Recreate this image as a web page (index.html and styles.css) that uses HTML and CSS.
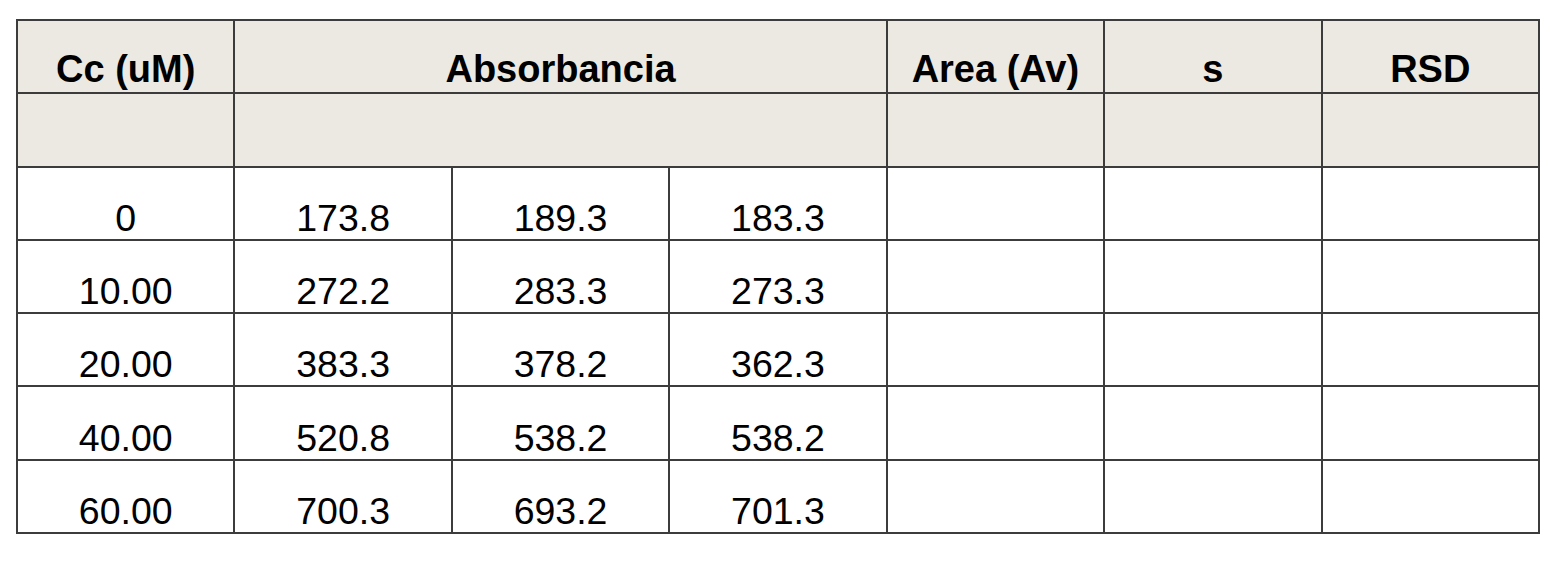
FILE: index.html
```html
<!DOCTYPE html>
<html>
<head>
<meta charset="utf-8">
<link rel="stylesheet" href="styles.css">
</head>
<body>
<div class="wrap">
<table class="grid">
<colgroup>
<col><col><col><col><col><col><col>
</colgroup>
<tr class="head">
<th>Cc (uM)</th>
<th colspan="3">Absorbancia</th>
<th>Area (Av)</th>
<th>s</th>
<th>RSD</th>
</tr>
<tr class="head">
<td></td>
<td colspan="3"></td>
<td></td>
<td></td>
<td></td>
</tr>
<tr><td>0</td><td>173.8</td><td>189.3</td><td>183.3</td><td></td><td></td><td></td></tr>
<tr><td>10.00</td><td>272.2</td><td>283.3</td><td>273.3</td><td></td><td></td><td></td></tr>
<tr><td>20.00</td><td>383.3</td><td>378.2</td><td>362.3</td><td></td><td></td><td></td></tr>
<tr><td>40.00</td><td>520.8</td><td>538.2</td><td>538.2</td><td></td><td></td><td></td></tr>
<tr><td>60.00</td><td>700.3</td><td>693.2</td><td>701.3</td><td></td><td></td><td></td></tr>
</table>
</div>
</body>
</html>
```
FILE: styles.css
```css
html, body {
  margin: 0;
  padding: 0;
  background: #ffffff;
}
.wrap {
  padding: 19px 0 0 16px;
}
.grid {
  width: 1524px;
  table-layout: fixed;
  border-collapse: collapse;
  font-family: "Liberation Sans", Arial, sans-serif;
  font-size: 37.5px;
  color: #000;
}
.grid th, .grid td {
  border: 2px solid #3c3c3c;
  height: 73.3px;
  padding: 0 0 1px 0;
  box-sizing: border-box;
  text-align: center;
  vertical-align: bottom;
  line-height: 40px;
  font-weight: normal;
}
.grid th {
  font-weight: bold;
  font-size: 38px;
  padding-bottom: 3px;
}
.head th, .head td {
  background: #ece9e2;
}
```
